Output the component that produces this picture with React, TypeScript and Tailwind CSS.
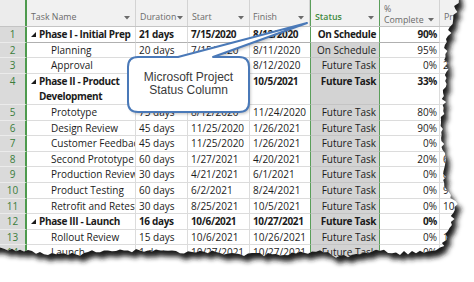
import React from 'react'

type Task = {
  id: number
  name: string
  name2?: string
  summary?: boolean
  dur: string
  start: string
  finish: string
  status: string
  pct: string
  pred: string
}

const TASKS: Task[] = [
  { id: 1, name: 'Phase I - Initial Prep', summary: true, dur: '21 days', start: '7/15/2020', finish: '8/12/2020', status: 'On Schedule', pct: '90%', pred: '' },
  { id: 2, name: 'Planning', dur: '20 days', start: '7/15/2020', finish: '8/11/2020', status: 'On Schedule', pct: '95%', pred: '' },
  { id: 3, name: 'Approval', dur: '1 day', start: '8/12/2020', finish: '8/12/2020', status: 'Future Task', pct: '0%', pred: '2' },
  { id: 4, name: 'Phase II - Product', name2: 'Development', summary: true, dur: '300 days', start: '8/12/2020', finish: '10/5/2021', status: 'Future Task', pct: '33%', pred: '' },
  { id: 5, name: 'Prototype', dur: '75 days', start: '8/12/2020', finish: '11/24/2020', status: 'Future Task', pct: '80%', pred: '3' },
  { id: 6, name: 'Design Review', dur: '45 days', start: '11/25/2020', finish: '1/26/2021', status: 'Future Task', pct: '90%', pred: '5' },
  { id: 7, name: 'Customer Feedback', dur: '45 days', start: '11/25/2020', finish: '1/26/2021', status: 'Future Task', pct: '0%', pred: '5' },
  { id: 8, name: 'Second Prototype', dur: '60 days', start: '1/27/2021', finish: '4/20/2021', status: 'Future Task', pct: '20%', pred: '6,7' },
  { id: 9, name: 'Production Review', dur: '30 days', start: '4/21/2021', finish: '6/1/2021', status: 'Future Task', pct: '0%', pred: '8' },
  { id: 10, name: 'Product Testing', dur: '60 days', start: '6/2/2021', finish: '8/24/2021', status: 'Future Task', pct: '0%', pred: '9' },
  { id: 11, name: 'Retrofit and Retest', dur: '30 days', start: '8/25/2021', finish: '10/5/2021', status: 'Future Task', pct: '0%', pred: '10' },
  { id: 12, name: 'Phase III - Launch', summary: true, dur: '16 days', start: '10/6/2021', finish: '10/27/2021', status: 'Future Task', pct: '0%', pred: '' },
  { id: 13, name: 'Rollout Review', dur: '15 days', start: '10/6/2021', finish: '10/26/2021', status: 'Future Task', pct: '0%', pred: '11' },
  { id: 14, name: 'Launch', dur: '1 day', start: '10/27/2021', finish: '10/27/2021', status: 'Future Task', pct: '0%', pred: '13' },
]

// seeded jitter so the torn edge is the same on every render
function makeRand(seed: number) {
  let s = seed
  return () => {
    s = (s * 9301 + 49297) % 233280
    return s / 233280
  }
}

function lerp(anchors: [number, number][], t: number) {
  for (let i = 0; i < anchors.length - 1; i++) {
    const [a0, v0] = anchors[i]
    const [a1, v1] = anchors[i + 1]
    if ((t >= a0 && t <= a1) || (t <= a0 && t >= a1)) {
      const k = a1 === a0 ? 0 : (t - a0) / (a1 - a0)
      return v0 + (v1 - v0) * k
    }
  }
  return anchors[anchors.length - 1][1]
}

function paperPath() {
  const rand = makeRand(17)
  const right: [number, number][] = [
    [0, 457], [15, 455], [30, 450], [45, 446], [70, 447], [100, 444], [125, 441],
    [150, 444], [175, 443], [190, 447], [205, 456], [220, 452], [235, 447], [248, 441],
  ]
  const bottom: [number, number][] = [
    [441, 249], [420, 252], [400, 253], [380, 251], [360, 255], [340, 257], [320, 252],
    [300, 252], [280, 255], [260, 255], [240, 254], [220, 253], [200, 251], [180, 252],
    [160, 249], [140, 251], [120, 250], [100, 251], [80, 254], [60, 255], [40, 252],
    [20, 251], [0, 248],
  ]
  const pts: string[] = ['-10,-10', '457,-10']
  for (let y = 0; y <= 246; y += 3) {
    const x = lerp(right, y) + (rand() - 0.5) * 5
    pts.push(`${x.toFixed(1)},${y}`)
  }
  for (let x = 440; x >= 0; x -= 4) {
    const y = lerp(bottom, x) + (rand() - 0.5) * 4
    pts.push(`${x},${y.toFixed(1)}`)
  }
  pts.push('-10,248')
  return 'M' + pts.join(' L') + ' Z'
}

const Arrow = () => (
  <svg width="6" height="4" viewBox="0 0 6 4" className="shrink-0">
    <polygon points="0,0 6,0 3,3.5" fill="#6b6b6b" />
  </svg>
)

const Expander = () => (
  <svg width="5" height="5" viewBox="0 0 5 5" className="shrink-0">
    <polygon points="0,5 5,5 5,0" fill="#1a1a1a" />
  </svg>
)

const TornEdge: React.FC = () => {
  const paper = paperPath()
  const outside = `M-20 -20H494V302H-20Z ${paper}`
  return (
    <svg className="absolute inset-0 pointer-events-none" width="474" height="282">
      <defs>
        <filter id="tornBlur" x="-10%" y="-10%" width="120%" height="120%">
          <feGaussianBlur stdDeviation="2.4" />
        </filter>
        <clipPath id="outsidePaper">
          <path d={outside} clipRule="evenodd" />
        </clipPath>
      </defs>
      <path d={outside} fill="#ffffff" fillRule="evenodd" />
      <g clipPath="url(#outsidePaper)">
        <path d={paper} transform="translate(4 6)" fill="#1f1f1f" filter="url(#tornBlur)" />
      </g>
    </svg>
  )
}

const Callout: React.FC = () => (
  <>
    <svg className="absolute inset-0 pointer-events-none" width="474" height="282">
      <defs>
        <filter id="calloutShadow" x="-10%" y="-10%" width="130%" height="130%">
          <feGaussianBlur stdDeviation="1.5" />
        </filter>
      </defs>
      <path
        d="M138 57 L178 57 L307 23 L213 57 L239 57 Q249 57 249 67 L249 102 Q249 112 239 112 L138 112 Q128 112 128 102 L128 67 Q128 57 138 57 Z"
        fill="#000000"
        opacity="0.25"
        transform="translate(1.5 2)"
        filter="url(#calloutShadow)"
      />
      <path
        d="M138 57 L178 57 L307 23 L213 57 L239 57 Q249 57 249 67 L249 102 Q249 112 239 112 L138 112 Q128 112 128 102 L128 67 Q128 57 138 57 Z"
        fill="#ffffff"
        stroke="#4a79b8"
        strokeWidth="2"
        strokeLinejoin="round"
      />
    </svg>
    <div className="absolute left-[128px] top-[71px] w-[121px] flex flex-col items-center text-[12px] leading-[13px] text-[#3a3a3a] font-['Liberation_Sans',Arial,sans-serif]">
      <span>Microsoft Project</span>
      <span>Status Column</span>
    </div>
  </>
)

export default function App() {
  return (
    <div className="relative w-[474px] h-[282px] overflow-hidden bg-white font-['Open_Sans',sans-serif] text-[10px] text-[#1b1b1b]">
      {/* Header */}
      <div className="flex h-[27px] bg-[#f1f1f1] border-b border-[#c4c4c4] text-[8.8px] leading-[12px] text-[#6a6a6a]">
        <div className="w-[27px] shrink-0 border-r-2 border-[#4e9a4e] bg-[#ececec]" />
        <div className="w-[109px] shrink-0 border-r border-[#d3d3d3] flex items-end justify-between pl-[4px] pr-[5px] pb-[3px]">
          <span>Task Name</span>
          <span className="mb-[3px]"><Arrow /></span>
        </div>
        <div className="w-[52px] shrink-0 border-r border-[#d3d3d3] flex items-end justify-between pl-[4px] pr-[4px] pb-[3px]">
          <span>Duration</span>
          <span className="mb-[3px]"><Arrow /></span>
        </div>
        <div className="w-[62px] shrink-0 border-r border-[#d3d3d3] flex items-end justify-between pl-[4px] pr-[5px] pb-[3px]">
          <span>Start</span>
          <span className="mb-[3px]"><Arrow /></span>
        </div>
        <div className="w-[60px] shrink-0 border-r border-[#d3d3d3] flex items-end justify-between pl-[3px] pr-[5px] pb-[3px]">
          <span>Finish</span>
          <span className="mb-[3px]"><Arrow /></span>
        </div>
        <div className="w-[70px] shrink-0 border-x border-[#5a9e5a] flex items-end justify-between pl-[4px] pr-[5px] pb-[3px]">
          <span className="font-semibold text-[#3f8a3f]">Status</span>
          <span className="mb-[3px]"><Arrow /></span>
        </div>
        <div className="w-[60px] shrink-0 border-r border-[#d3d3d3] flex items-end justify-between pl-[4px] pr-[5px] pb-[1px] leading-[10.5px]">
          <span className="flex flex-col">
            <span>%</span>
            <span>Complete</span>
          </span>
          <span className="mb-[3px]"><Arrow /></span>
        </div>
        <div className="w-[60px] shrink-0 flex items-end pl-[4px] pb-[3px]">
          <span>Predecessors</span>
        </div>
      </div>

      {/* Rows */}
      {TASKS.map((t) => {
        const tall = !!t.name2
        const first = t.id === 1
        return (
          <div
            key={t.id}
            className={`flex leading-[15.6px] ${tall ? 'h-[31.2px]' : 'h-[15.6px]'} ${t.summary ? 'font-bold tracking-[-0.35px]' : ''}`}
          >
            <div className="w-[27px] shrink-0 border-r-2 border-b border-[#4e9a4e] border-b-[#ebebeb] bg-[#dadada] text-center text-[#3b7d3b] font-normal tracking-normal">
              {t.id}
            </div>
            <div
              className={`w-[109px] shrink-0 border-r border-b border-[#dcdcdc] overflow-hidden whitespace-nowrap ${first ? 'border-b-[#b0b0b0]' : ''} ${t.summary ? 'pl-[4px]' : 'pl-[24px]'}`}
            >
              {t.summary ? (
                <div className="flex flex-col">
                  <span className="flex items-center gap-[3px]">
                    <Expander />
                    <span>{t.name}</span>
                  </span>
                  {t.name2 && <span className="pl-[8px]">{t.name2}</span>}
                </div>
              ) : (
                t.name
              )}
            </div>
            <div className={`w-[52px] shrink-0 border-r border-b border-[#dcdcdc] overflow-hidden whitespace-nowrap pl-[3px] ${first ? 'border-b-[#b0b0b0]' : ''}`}>
              {t.dur}
            </div>
            <div className={`w-[62px] shrink-0 border-r border-b border-[#dcdcdc] overflow-hidden whitespace-nowrap pl-[3px] ${first ? 'border-b-[#b0b0b0]' : ''}`}>
              {t.start}
            </div>
            <div className={`w-[60px] shrink-0 border-b border-[#dcdcdc] overflow-hidden whitespace-nowrap pl-[3px] ${first ? 'border-b-[#b0b0b0]' : ''}`}>
              {t.finish}
            </div>
            <div
              className={`w-[70px] shrink-0 border-x border-[#5a9e5a] border-b border-b-[#c4c4c4] overflow-hidden whitespace-nowrap text-right pr-[3px] ${first ? 'bg-white' : 'bg-[#d3d3d3]'}`}
            >
              {t.status}
            </div>
            <div className={`w-[60px] shrink-0 border-r border-b border-[#dcdcdc] overflow-hidden whitespace-nowrap text-right pr-[2px] ${first ? 'border-b-[#b0b0b0]' : ''}`}>
              {t.pct}
            </div>
            <div className="w-[60px] shrink-0 border-b border-[#dcdcdc] overflow-hidden whitespace-nowrap pl-[3px] font-normal">
              {t.pred}
            </div>
          </div>
        )
      })}

      <Callout />
      <TornEdge />
    </div>
  )
}
